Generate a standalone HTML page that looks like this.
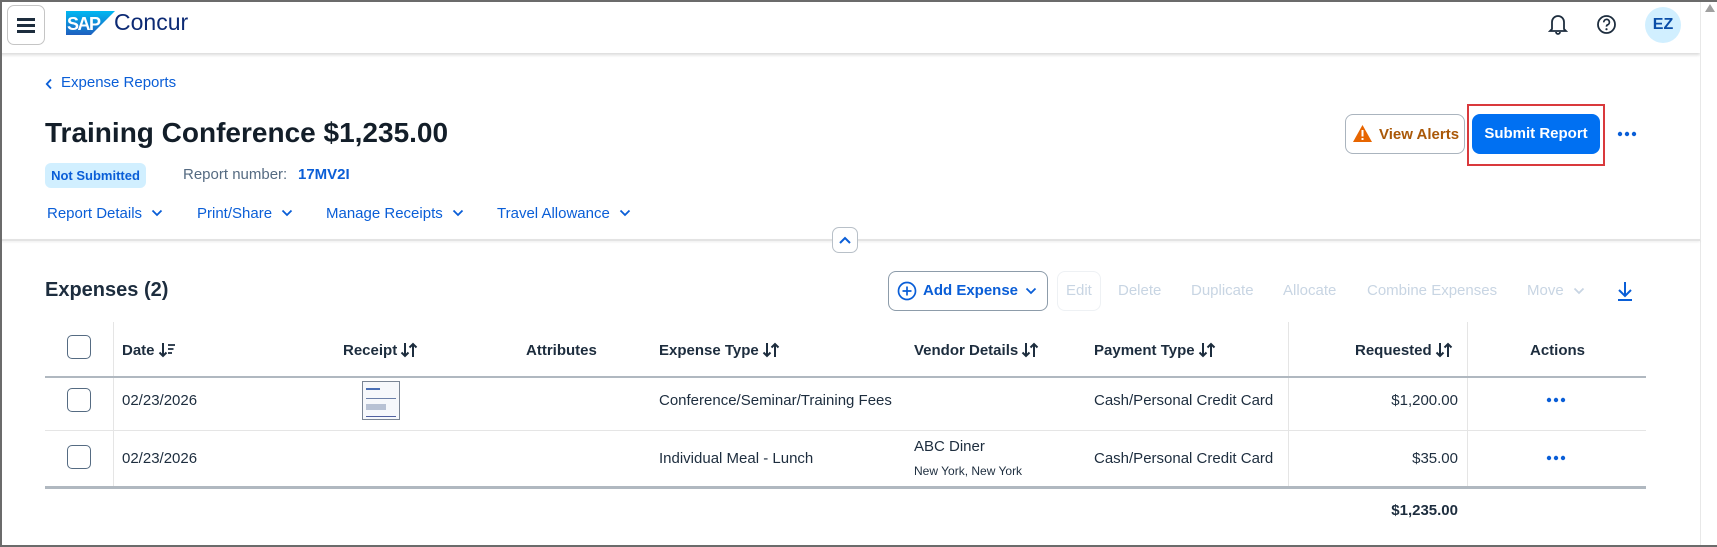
<!DOCTYPE html>
<html><head><meta charset="utf-8"><style>
*{box-sizing:border-box;margin:0;padding:0}
body{width:1717px;height:547px;overflow:hidden;background:#fff;font-family:"Liberation Sans",sans-serif;color:#1d2d3e;position:relative}
.a{position:absolute;white-space:nowrap}
.blue{color:#0a5ed7}
.frame{position:absolute;left:0;top:0;width:1717px;height:547px;border:2px solid #6b6b6b;border-right:none;pointer-events:none}
.th{font-size:15px;font-weight:bold;color:#1d2d3e;top:340px;height:20px;display:flex;align-items:center}
.td{font-size:15px;color:#1d2d3e}
.cb{position:absolute;width:24px;height:24px;border:1.5px solid #556b82;border-radius:5px;background:#fff}
.dis{color:#c8d5e3;font-size:15px;top:282px}
.s{margin-left:3px;flex:none}
.chev{display:inline-block;vertical-align:1px;margin-left:9px}
</style></head><body>
<svg width="0" height="0" style="position:absolute"><defs>
<symbol id="so" viewBox="0 0 18 18"><path d="M5 2v13M1.5 11.5L5 15l3.5-3.5" fill="none" stroke="#1d2d3e" stroke-width="2"/><path d="M13 16V3M9.5 6.5L13 3l3.5 3.5" fill="none" stroke="#1d2d3e" stroke-width="2"/></symbol>
<symbol id="sd" viewBox="0 0 18 18"><path d="M5 2v13M1.5 11.5L5 15l3.5-3.5" fill="none" stroke="#1d2d3e" stroke-width="2"/><path d="M10 4h7M10 8h5.5M10 12h4" stroke="#1d2d3e" stroke-width="1.8"/></symbol>
<symbol id="ch" viewBox="0 0 12 8"><path d="M1.5 1.5L6 6l4.5-4.5" fill="none" stroke="#0a5ed7" stroke-width="1.8"/></symbol>
<symbol id="dots" viewBox="0 0 20 6"><circle cx="3" cy="3" r="2.2" fill="#0a5ed7"/><circle cx="10" cy="3" r="2.2" fill="#0a5ed7"/><circle cx="17" cy="3" r="2.2" fill="#0a5ed7"/></symbol>
</defs></svg>
<div class="a" style="left:0;top:0;width:1700px;height:53px;background:#fff;box-shadow:0 2px 3px rgba(0,0,0,.15)"></div>
<div class="a" style="left:7px;top:5px;width:38px;height:40px;border:1px solid #c5c5c5;border-radius:7px;background:#fff"></div>
<div class="a" style="left:17px;top:18px;width:18px;height:2.5px;background:#1d2d3e"></div>
<div class="a" style="left:17px;top:24px;width:18px;height:2.5px;background:#1d2d3e"></div>
<div class="a" style="left:17px;top:30px;width:18px;height:2.5px;background:#1d2d3e"></div>
<svg class="a" style="left:66px;top:11px" width="49" height="24"><defs><linearGradient id="g" x1="0" y1="0" x2="0" y2="1"><stop offset="0" stop-color="#00b8f1"/><stop offset="1" stop-color="#1e5fbf"/></linearGradient></defs><polygon points="0,0 49,0 25,24 0,24" fill="url(#g)"/><text x="1" y="19" font-family="Liberation Sans" font-weight="bold" font-size="18" fill="#fff" letter-spacing="-1.5">SAP</text></svg>
<div class="a" style="left:114px;top:9px;font-size:23px;color:#0c2a74">Concur</div>
<svg class="a" style="left:1548px;top:13px" width="20" height="22" viewBox="0 0 20 22"><path d="M4 16V9a6 6 0 0 1 12 0v7l2 2H2z M8 19a2 2 0 0 0 4 0" fill="none" stroke="#1d2d3e" stroke-width="1.8"/></svg>
<svg class="a" style="left:1596px;top:14px" width="21" height="21" viewBox="0 0 21 21"><circle cx="10.5" cy="10.5" r="8.5" fill="none" stroke="#1d2d3e" stroke-width="1.8"/><path d="M7.8 8.3a2.8 2.8 0 1 1 3.8 2.5c-.9.4-1.1 1-1.1 1.8" fill="none" stroke="#1d2d3e" stroke-width="1.7"/><circle cx="10.5" cy="15.2" r="1.1" fill="#1d2d3e"/></svg>
<div class="a" style="left:1645px;top:7px;width:36px;height:36px;border-radius:50%;background:#d1efff;color:#0a4ea8;font-size:16px;font-weight:bold;text-align:center;line-height:36px">EZ</div>
<div class="a" style="left:1700px;top:0;width:17px;height:547px;background:#fff;border-left:1px solid #e8e8e8"></div>
<svg class="a" style="left:1705px;top:4px" width="10" height="8"><polygon points="5,0 10,8 0,8" fill="#a0a0a0"/></svg>

<svg class="a" style="left:45px;top:78px" width="8" height="12"><path d="M6 1.5L1.8 6 6 10.5" fill="none" stroke="#0a5ed7" stroke-width="1.8"/></svg>
<div class="a blue" style="left:61px;top:74px;font-size:15px">Expense Reports</div>
<div class="a" style="left:45px;top:117px;font-size:28px;font-weight:900;color:#131e29">Training Conference $1,235.00</div>
<div class="a" style="left:45px;top:163px;width:101px;height:25px;border-radius:6px;background:#d1efff;color:#0a5ed7;font-size:13px;font-weight:bold;text-align:center;line-height:25px">Not Submitted</div>
<div class="a" style="left:183px;top:166px;font-size:15px;color:#556b82">Report number:</div>
<div class="a blue" style="left:298px;top:166px;font-size:15px;font-weight:bold">17MV2I</div>
<div class="a blue" style="left:47px;top:205px;font-size:15px">Report Details<svg class="chev" width="12" height="8"><use href="#ch"/></svg></div>
<div class="a blue" style="left:197px;top:205px;font-size:15px">Print/Share<svg class="chev" width="12" height="8"><use href="#ch"/></svg></div>
<div class="a blue" style="left:326px;top:205px;font-size:15px">Manage Receipts<svg class="chev" width="12" height="8"><use href="#ch"/></svg></div>
<div class="a blue" style="left:497px;top:205px;font-size:15px">Travel Allowance<svg class="chev" width="12" height="8"><use href="#ch"/></svg></div>
<div class="a" style="left:0;top:239px;width:1700px;height:2px;background:#e3e3e3;box-shadow:0 1px 2px rgba(0,0,0,.08)"></div>
<div class="a" style="left:832px;top:227px;width:26px;height:26px;border:1px solid #b8c0c8;border-radius:7px;background:#fff"></div>
<svg class="a" style="left:839px;top:236px" width="12" height="8"><path d="M1 7l5-5 5 5" fill="none" stroke="#0a5ed7" stroke-width="2"/></svg>

<div class="a" style="left:1345px;top:114px;width:120px;height:40px;border:1px solid #aab4be;border-radius:8px;background:#fff"></div>
<svg class="a" style="left:1353px;top:125px" width="19" height="17"><polygon points="9.5,0 19,17 0,17" fill="#e76500"/><rect x="8.5" y="5" width="2" height="6.5" fill="#fff"/><rect x="8.5" y="13" width="2" height="2" fill="#fff"/></svg>
<div class="a" style="left:1379px;top:126px;font-size:15px;font-weight:bold;color:#aa5808">View Alerts</div>
<div class="a" style="left:1467px;top:104px;width:138px;height:62px;border:2px solid #d9393c"></div>
<div class="a" style="left:1472px;top:114px;width:128px;height:40px;border-radius:8px;background:#0070f2;color:#fff;font-size:15px;font-weight:bold;text-align:center;line-height:40px">Submit Report</div>
<svg class="a" style="left:1617px;top:131px" width="20" height="6"><use href="#dots"/></svg>

<div class="a" style="left:45px;top:279px;font-size:20px;font-weight:bold;color:#1d2d3e">Expenses (2)</div>
<div class="a" style="left:888px;top:271px;width:160px;height:40px;border:1px solid #8d9caa;border-radius:8px;background:#fff"></div>
<svg class="a" style="left:897px;top:281px" width="20" height="20"><circle cx="10" cy="10" r="8.5" fill="none" stroke="#0a5ed7" stroke-width="1.7"/><path d="M10 5.5v9M5.5 10h9" stroke="#0a5ed7" stroke-width="1.7"/></svg>
<div class="a blue" style="left:923px;top:282px;font-size:15px;font-weight:bold">Add Expense</div>
<svg class="a" style="left:1025px;top:287px" width="12" height="8"><use href="#ch"/></svg>
<div class="a" style="left:1057px;top:271px;width:44px;height:40px;border:1px solid #eef1f4;border-radius:8px"></div>
<div class="a dis" style="left:1066px">Edit</div>
<div class="a dis" style="left:1118px">Delete</div>
<div class="a dis" style="left:1191px">Duplicate</div>
<div class="a dis" style="left:1283px">Allocate</div>
<div class="a dis" style="left:1367px">Combine Expenses</div>
<div class="a dis" style="left:1527px">Move</div>
<svg class="a" style="left:1573px;top:287px" width="12" height="8" viewBox="0 0 12 8"><path d="M1.5 1.5L6 6l4.5-4.5" fill="none" stroke="#c8d5e3" stroke-width="1.8"/></svg>
<svg class="a" style="left:1616px;top:280px" width="18" height="22"><path d="M9 2v14M3 10l6 6 6-6" fill="none" stroke="#0a5ed7" stroke-width="2"/><rect x="2" y="19" width="14" height="2" fill="#0a5ed7"/></svg>

<div class="a" style="left:113px;top:322px;width:1px;height:165px;background:#e5e5e5"></div>
<div class="a" style="left:1288px;top:322px;width:1px;height:165px;background:#e5e5e5"></div>
<div class="a" style="left:1467px;top:322px;width:1px;height:165px;background:#e5e5e5"></div>
<div class="a" style="left:45px;top:376px;width:1601px;height:1.5px;background:#b0b8c0"></div>
<div class="a" style="left:45px;top:430px;width:1601px;height:1px;background:#e5e5e5"></div>
<div class="a" style="left:45px;top:486px;width:1601px;height:2.5px;background:#b0b8c0"></div>
<div class="cb" style="left:67px;top:335px"></div>
<div class="cb" style="left:67px;top:388px"></div>
<div class="cb" style="left:67px;top:445px"></div>
<div class="a th" style="left:122px">Date<svg class="s" width="18" height="18"><use href="#sd"/></svg></div>
<div class="a th" style="left:343px">Receipt<svg class="s" width="18" height="18"><use href="#so"/></svg></div>
<div class="a th" style="left:526px">Attributes</div>
<div class="a th" style="left:659px">Expense Type<svg class="s" width="18" height="18"><use href="#so"/></svg></div>
<div class="a th" style="left:914px">Vendor Details<svg class="s" width="18" height="18"><use href="#so"/></svg></div>
<div class="a th" style="left:1094px">Payment Type<svg class="s" width="18" height="18"><use href="#so"/></svg></div>
<div class="a th" style="left:1355px">Requested<svg class="s" width="18" height="18"><use href="#so"/></svg></div>
<div class="a th" style="left:1530px">Actions</div>

<div class="a td" style="left:122px;top:392px">02/23/2026</div>
<div class="a" style="left:362px;top:381px;width:38px;height:39px;border:1px solid #7a8594;background:#f6f8fb"></div>
<div class="a" style="left:366px;top:388px;width:14px;height:2px;background:#4a6fb5"></div>
<div class="a" style="left:366px;top:398px;width:30px;height:1px;background:#6b7fa8"></div>
<div class="a" style="left:366px;top:404px;width:20px;height:6px;background:#b8c2d4"></div>
<div class="a" style="left:366px;top:416px;width:30px;height:1px;background:#5060a0"></div>
<div class="a td" style="left:659px;top:392px">Conference/Seminar/Training Fees</div>
<div class="a td" style="left:1094px;top:392px">Cash/Personal Credit Card</div>
<div class="a td" style="left:1359px;top:392px;width:99px;text-align:right">$1,200.00</div>
<svg class="a" style="left:1546px;top:397px" width="20" height="6"><use href="#dots"/></svg>

<div class="a td" style="left:122px;top:450px">02/23/2026</div>
<div class="a td" style="left:659px;top:450px">Individual Meal - Lunch</div>
<div class="a td" style="left:914px;top:438px">ABC Diner</div>
<div class="a" style="left:914px;top:464px;font-size:12px;color:#1d2d3e">New York, New York</div>
<div class="a td" style="left:1094px;top:450px">Cash/Personal Credit Card</div>
<div class="a td" style="left:1359px;top:450px;width:99px;text-align:right">$35.00</div>
<svg class="a" style="left:1546px;top:455px" width="20" height="6"><use href="#dots"/></svg>

<div class="a td" style="left:1339px;top:502px;width:119px;text-align:right;font-weight:bold">$1,235.00</div>
<div class="frame"></div>
</body></html>
